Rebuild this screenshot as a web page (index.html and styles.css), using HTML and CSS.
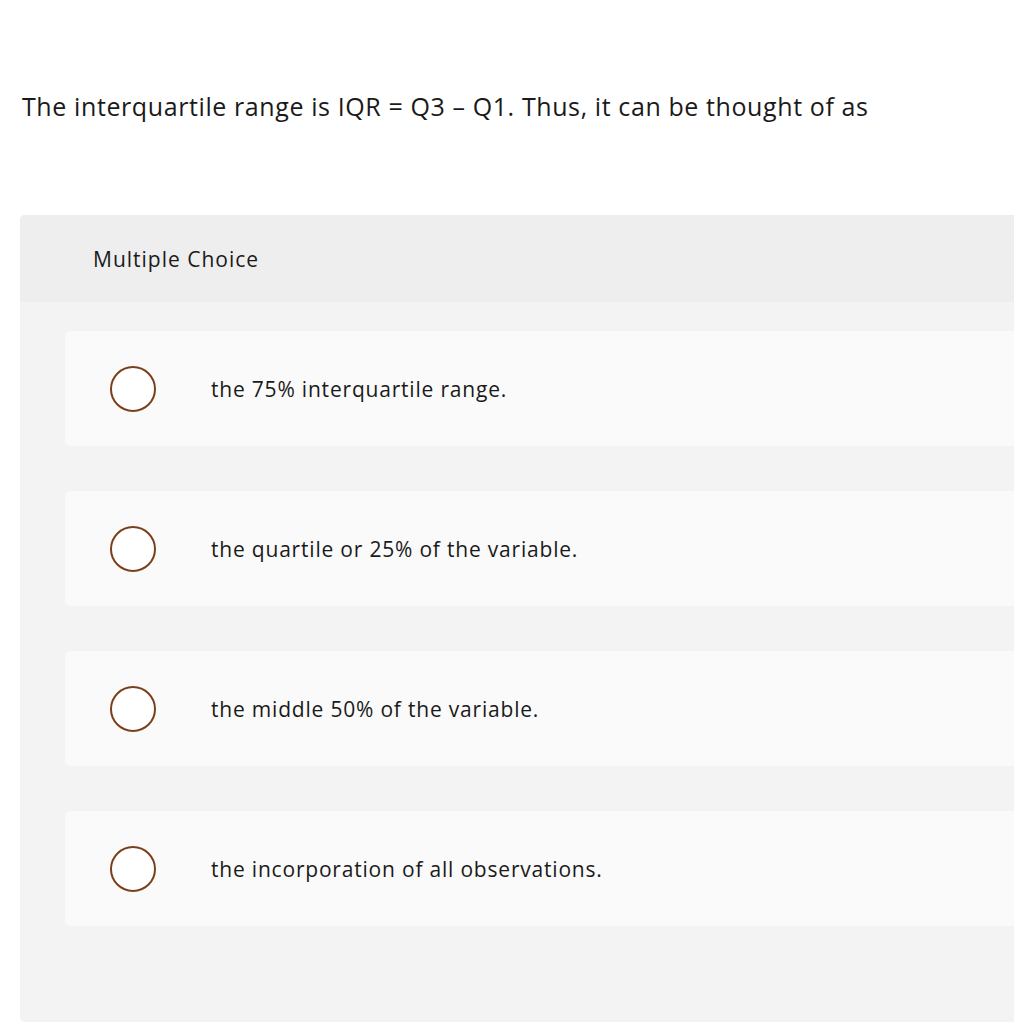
FILE: index.html
```html
<!DOCTYPE html>
<html>
<head>
<meta charset="utf-8">
<link rel="stylesheet" href="styles.css">
</head>
<body>
<div class="page">
  <p class="question">The interquartile range is IQR = Q3 – Q1. Thus, it can be thought of as</p>
  <div class="panel">
    <div class="panel-head">Multiple Choice</div>
    <div class="panel-body">
      <div class="option"><span class="radio"></span><span class="label">the 75% interquartile range.</span></div>
      <div class="option"><span class="radio"></span><span class="label">the quartile or 25% of the variable.</span></div>
      <div class="option"><span class="radio"></span><span class="label">the middle 50% of the variable.</span></div>
      <div class="option"><span class="radio"></span><span class="label">the incorporation of all observations.</span></div>
    </div>
  </div>
</div>
</body>
</html>
```
FILE: styles.css
```css
html, body {
  margin: 0;
  padding: 0;
  background: #ffffff;
  overflow: hidden;
}
body {
  font-family: "Open Sans", "Lato", sans-serif;
  color: #1a1a1a;
}
.page {
  padding-top: 88px;
}
.question {
  margin: 0 0 0 22px;
  font-size: 25px;
  letter-spacing: 0.6px;
  line-height: 36px;
  height: 36px;
}
.panel {
  margin: 91px 0 0 20px;
  width: 1010px;
  background: #f3f3f3;
  border-radius: 5px;
  overflow: hidden;
}
.panel-head {
  height: 87px;
  background: #eeeeee;
  display: flex;
  align-items: center;
  padding-left: 73px;
  font-size: 21px;
  letter-spacing: 1px;
  box-sizing: border-box;
}
.panel-body {
  padding: 29px 0 96px 45px;
  display: flex;
  flex-direction: column;
  gap: 45px;
}
.option {
  height: 115px;
  background: #fafafa;
  border-radius: 5px 0 0 5px;
  display: flex;
  align-items: center;
  padding-left: 45px;
  box-sizing: border-box;
}
.radio {
  width: 46px;
  height: 46px;
  box-sizing: border-box;
  border: 2px solid #7a4019;
  border-radius: 50%;
  background: #ffffff;
  flex: none;
}
.label {
  margin-left: 55px;
  font-size: 21px;
  letter-spacing: 0.8px;
}
```
